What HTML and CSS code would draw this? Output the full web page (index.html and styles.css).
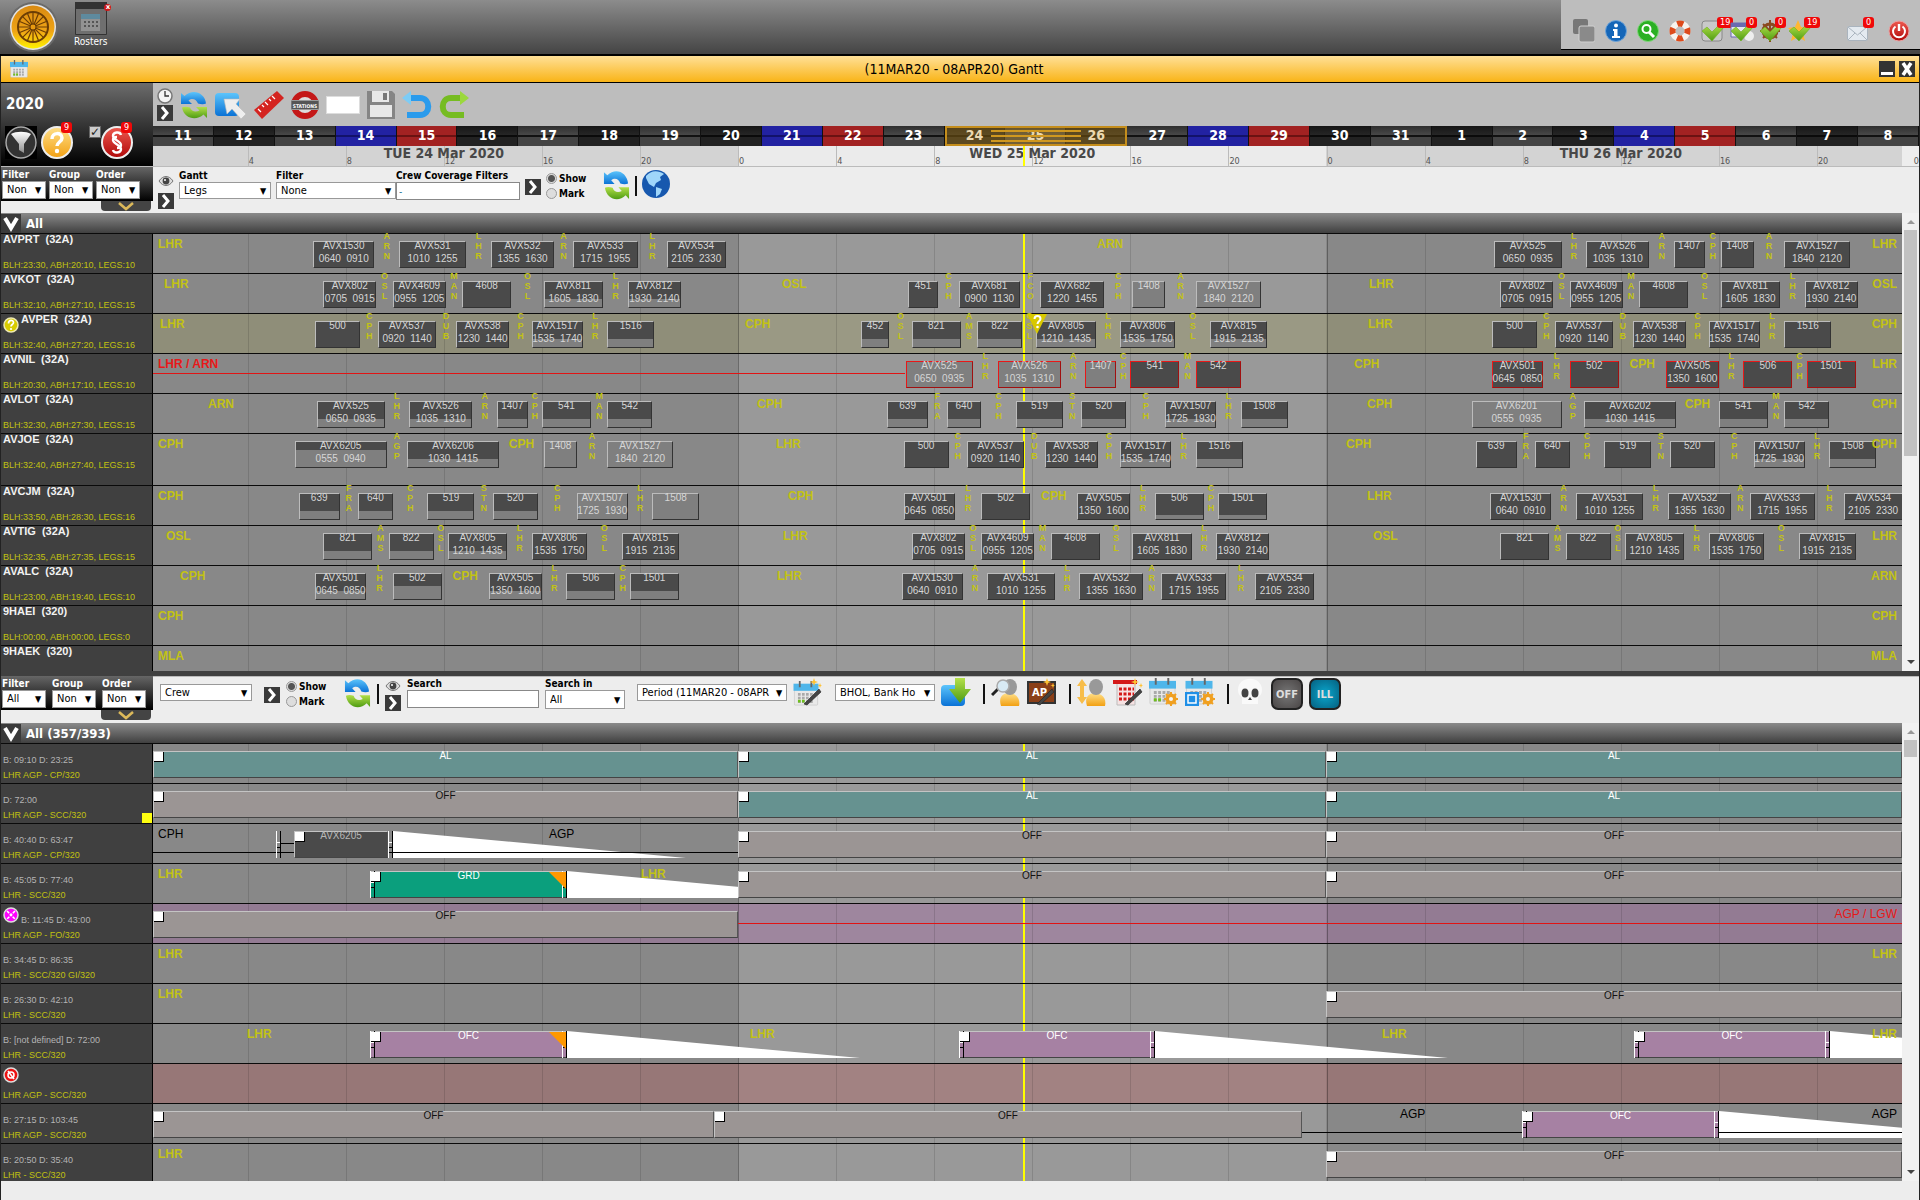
FILE: index.html
```html
<!DOCTYPE html>
<html lang="en">
<head>
<meta charset="utf-8">
<title>(11MAR20 - 08APR20) Gantt</title>
<link rel="stylesheet" href="styles.css">
</head>
<body>
<svg class="defs" width="0" height="0" aria-hidden="true">
  <defs>
    <linearGradient id="gBlue" x1="0" y1="0" x2="0" y2="1"><stop offset="0" stop-color="#5cc4fb"/><stop offset="1" stop-color="#0a72d6"/></linearGradient>
    <linearGradient id="gGreen" x1="0" y1="0" x2="0" y2="1"><stop offset="0" stop-color="#b4e04a"/><stop offset="1" stop-color="#4e9c12"/></linearGradient>
    <linearGradient id="gGold" x1="0" y1="0" x2="0" y2="1"><stop offset="0" stop-color="#ffe08a"/><stop offset="1" stop-color="#f2a012"/></linearGradient>
    <linearGradient id="gSilver" x1="0" y1="0" x2="0" y2="1"><stop offset="0" stop-color="#ffffff"/><stop offset="1" stop-color="#8c8c8c"/></linearGradient>
    <linearGradient id="gRed" x1="0" y1="0" x2="0" y2="1"><stop offset="0" stop-color="#ee5a50"/><stop offset="1" stop-color="#b00808"/></linearGradient>
    <linearGradient id="gLogo" x1="0" y1="0" x2="0" y2="1"><stop offset="0" stop-color="#d98a12"/><stop offset=".6" stop-color="#efa416"/><stop offset="1" stop-color="#fff200"/></linearGradient>
  </defs>
  <symbol id="refresh" viewBox="0 0 28 28" preserveAspectRatio="none">
    <path d="M1 2v11h11L8.500 9.500c4-3 8-1 9.500 3 3 1 6 1 8 0C25 2 13-3 4.500 5z" fill="url(#gBlue)"/>
    <path d="M27 16H16l3.500 3.500c-4 2-8 1-9.500-3-3-1-6-1-8 0 2 11 14 14 21.500 7L27 27z" fill="url(#gGreen)"/>
  </symbol>
  <symbol id="chev" viewBox="0 0 16 16"><path fill="#3a3a3a" d="M0 0h16v16H0z"/><path d="M5 2l5 6-5 6" fill="none" stroke="#fff" stroke-width="3"/></symbol>
  <symbol id="clock" viewBox="0 0 16 16"><circle cx="8" cy="8" r="7" fill="#f4f4f4" stroke="#777" stroke-width="1.5"/><path d="M8 3v5h4" fill="none" stroke="#333" stroke-width="1.3"/></symbol>
  <symbol id="eye" viewBox="0 0 16 12"><path d="M1 6c4-6 10-6 14 0-4 6-10 6-14 0z" fill="#ddd" stroke="#777"/><circle cx="8" cy="6" r="3.4" fill="#444"/><circle cx="7" cy="5" r="1" fill="#fff"/></symbol>
  <symbol id="cal" viewBox="0 0 28 28"><rect x="1" y="5" width="26" height="22" rx="1" fill="#e9e9e9" stroke="#bdbdbd" stroke-width=".6"/><path fill="#4fb6ea" d="M0 3h28v8H0z"/><path d="M7 0v7M20 0v7" stroke="#666" stroke-width="2"/>
    <path fill="none" stroke="#aaa" stroke-width="3" stroke-dasharray="3 1.5" d="M5 15h18M5 19h18M5 23h18"/><path fill="#6fbf1c" d="M5 21h3v3H5zM9.500 21h3v3H9.500z"/></symbol>
  <symbol id="wand" viewBox="0 0 28 28"><path d="M10 26L25 11l2 3-14 13z" fill="#444" stroke="#222" stroke-width=".6"/><path d="M20 0l1 3 3 1-3 1-1 3-1-3-3-1 3-1zM26 5l.7 2 1.300.5-1.300.5-.7 2-.7-2-2-.5 2-.5z" fill="#ffc233"/></symbol>
  <symbol id="gear" viewBox="0 0 14 14"><circle cx="7" cy="7" r="4" fill="none" stroke="#f0a020" stroke-width="3"/><path d="M7 0v14M0 7h14M2 2l10 10M12 2L2 12" stroke="#f0a020" stroke-width="2"/><circle cx="7" cy="7" r="2" fill="#f4f4f4"/></symbol>
  <symbol id="tick" viewBox="0 0 24 18"><path d="M1 7l5-4 5 5L19 0l4 3L11 17z" fill="url(#gGreen)" stroke="#6bb01c" stroke-width=".6"/></symbol>
  <symbol id="person" viewBox="0 0 28 28"><path d="M8 28c-3-9 2-13 8-13s12 5 10 13z" fill="url(#gGold)"/><ellipse cx="17" cy="9" rx="7" ry="8" fill="#999"/></symbol>
</svg>

<header class="desktop-bar">
  <button class="bare" aria-label="Home"><svg width="50" height="50" viewBox="0 0 50 50"><circle cx="25" cy="25" r="25" fill="#6a6a6a"/><circle cx="25" cy="25" r="23" fill="#e4e4e4"/><circle cx="25" cy="25" r="21.500" fill="url(#gLogo)"/><circle cx="25" cy="25" r="15" fill="none" stroke="#6b3d05" stroke-width="2"/><g stroke="#6b3d05" stroke-width="1.2"><path d="M25 10v30M10 25h30M14.400 14.400l21.200 21.200M35.600 14.400L14.400 35.600M11.100 19.300l27.800 11.400M38.900 19.300L11.100 30.700M19.300 11.100l11.400 27.800M30.700 11.100L19.300 38.900"/></g><circle cx="25" cy="25" r="3" fill="#e89a10" stroke="#6b3d05"/></svg></button>
  <button class="bare app"><svg width="32" height="33" viewBox="0 0 32 33"><path fill="#6f6f6f" stroke="#333" d="M.5.5h31v32H.5z"/><path fill="#333" d="M0 0h32v7H0z"/><path fill="#5e8a9e" d="M6 12h19v5H6z"/><path fill="#929292" d="M6 17h19v12H6z"/><path stroke="#555" stroke-width="2" stroke-dasharray="2 2" d="M9 20h14M9 24h14"/></svg><span>Rosters</span><i class="app-close">x</i></button>
  <div class="tray">
    <div class="tray-group wide">
      <button class="bare" aria-label="Windows"><svg width="22" height="24" viewBox="0 0 22 24"><rect x="0" y="0" width="15" height="15" rx="2" fill="#777"/><rect x="6" y="7" width="16" height="16" rx="2" fill="#8a8a8a" stroke="#d0d0d0"/></svg></button>
      <button class="bare" aria-label="Information"><svg width="22" height="22" viewBox="0 0 22 22"><circle cx="11" cy="11" r="10.500" fill="#1566b8" stroke="#6da3d8"/><circle cx="11" cy="5.500" r="2" fill="#fff"/><path d="M8 9h4.500v7H15v2H7v-2h2v-5H8z" fill="#fff"/></svg></button>
      <button class="bare" aria-label="Search"><svg width="22" height="22" viewBox="0 0 22 22"><circle cx="11" cy="11" r="10.500" fill="#2bb024" stroke="#7fd67a"/><circle cx="9.500" cy="9" r="4" fill="none" stroke="#fff" stroke-width="2"/><path d="M12 12l5 5" stroke="#fff" stroke-width="3"/></svg></button>
      <button class="bare" aria-label="Help"><svg width="22" height="22" viewBox="0 0 22 22"><circle cx="11" cy="11" r="7.500" fill="none" stroke="#f7f3ee" stroke-width="6"/><circle cx="11" cy="11" r="7.500" fill="none" stroke="#dd4b1c" stroke-width="6" stroke-dasharray="6 5.780" stroke-dashoffset="3"/></svg></button>
    </div>
    <div class="tray-group">
      <button class="bare" aria-label="Requests"><svg width="24" height="22" viewBox="0 0 24 22"><rect x="1" y="1" width="20" height="20" rx="3" fill="#c9c9c9" stroke="#888"/><use href="#tick" y="4" width="24" height="18"/></svg><b class="badge">19</b></button>
      <button class="bare" aria-label="Schedules"><svg width="24" height="22" viewBox="0 0 24 22"><path fill="#e4e4ee" stroke="#6a6ab0" d="M1 3h18v14H1z"/><path fill="#6a6ab0" d="M1 3h18v4H1z"/><circle cx="19" cy="16" r="5" fill="#eee"/><use href="#tick" y="4" width="24" height="18"/></svg><b class="badge">0</b></button>
      <button class="bare" aria-label="Duties"><svg width="24" height="22" viewBox="0 0 24 22"><circle cx="11" cy="11" r="7" fill="none" stroke="#8b4a20" stroke-width="3"/><path d="M11 0v22M1 11h20M4 4l14 14M18 4L4 18" stroke="#8b4a20" stroke-width="2"/><use href="#tick" y="4" width="24" height="18"/></svg><b class="badge">0</b></button>
      <button class="bare" aria-label="Alerts"><svg width="24" height="22" viewBox="0 0 24 22"><path d="M10 0l3 7 7 1-5 5 2 8-7-4-7 4 2-8-5-5 7-1z" fill="#ffb733"/><use href="#tick" y="4" width="24" height="18"/></svg><b class="badge">19</b></button>
    </div>
    <button class="bare mail" aria-label="Mail"><svg width="22" height="22" viewBox="0 0 22 22"><rect x=".5" y="6.500" width="20" height="14" rx="1" fill="#e4eaf0" stroke="#aab4be"/><path d="M1 7l9.500 8L20 7M1 20l7-7M20 20l-7-7" fill="none" stroke="#aab4be"/></svg><b class="badge">0</b></button>
    <button class="bare" aria-label="Log out"><svg width="22" height="22" viewBox="0 0 22 22"><circle cx="11" cy="11" r="10" fill="url(#gRed)" stroke="#e9a0a0"/><path d="M7.500 6.500a6 6 0 1 0 7 0" fill="none" stroke="#fff" stroke-width="2"/><path d="M11 4v7" stroke="#fff" stroke-width="2.400"/></svg></button>
  </div>
</header>

<main class="window">
  <div class="titlebar">
    <svg width="20" height="18"><use href="#cal"/></svg>
    <h1>(11MAR20 - 08APR20) Gantt</h1>
    <div class="win-buttons">
      <button aria-label="Minimise"><svg width="16" height="16"><path fill="#fff" d="M2 11h12v3H2z"/></svg></button>
      <button aria-label="Close"><svg width="16" height="16"><path d="M4 2l8 12M12 2L4 14" stroke="#fff" stroke-width="3.500"/></svg></button>
    </div>
  </div>

  <section class="head">
    <aside class="head-side">
      <strong>2020</strong>
      <div class="side-icons">
        <button class="bare" aria-label="Filter"><svg width="32" height="33" viewBox="0 0 32 33"><path d="M0 0h32v33H0z"/><ellipse cx="16" cy="16.500" rx="15" ry="15.500" fill="#333" stroke="#aaa" stroke-width="1.500"/><path d="M6 8c5-3 15-3 20 0l-7 10v9l-5-3v-6z" fill="url(#gSilver)"/></svg></button>
        <button class="bare" aria-label="Questions"><svg width="32" height="33" viewBox="0 0 32 33"><ellipse cx="16" cy="16.500" rx="15" ry="15.500" fill="url(#gGold)" stroke="#eee" stroke-width="2"/><path d="M11 13c0-7 10-7 10-1 0 4-5 4-5 8" fill="none" stroke="#fff" stroke-width="3.500"/><circle cx="16" cy="25" r="2.200" fill="#fff"/></svg><b class="badge">9</b></button>
        <input type="checkbox" checked aria-label="Show violations">
        <button class="bare" aria-label="Violations"><svg width="32" height="33" viewBox="0 0 32 33"><ellipse cx="16" cy="16.500" rx="15" ry="15.500" fill="url(#gRed)" stroke="#eee" stroke-width="2"/><path d="M20 9c-1-4-8-3-8 1 0 4 8 5 8 9 0 2-2 3-4 3M12 24c1 4 8 3 8-1 0-4-8-5-8-9 0-2 2-3 4-3" fill="none" stroke="#fff" stroke-width="2.400"/></svg><b class="badge">9</b></button>
      </div>
    </aside>
    <div class="head-main">
      <div class="tools">
        <div class="stack"><svg width="16" height="16"><use href="#clock"/></svg><button class="bare" aria-label="Expand"><svg width="16" height="16"><use href="#chev"/></svg></button></div>
        <button class="bare" aria-label="Refresh"><svg width="28" height="28"><use href="#refresh"/></svg></button>
        <button class="bare" aria-label="Select"><svg width="32" height="28" viewBox="0 0 32 28"><rect x="0" y="2" width="24" height="23" rx="4" fill="url(#gBlue)"/><path d="M9 8h16l-4 5 10 10-5 5-9-10-5 5z" fill="#eee" stroke="#bbb" stroke-width=".6"/></svg></button>
        <button class="bare" aria-label="Measure"><svg width="30" height="28" viewBox="0 0 30 28"><path d="M23 0l7 7L8 28 0 19z" fill="#d42420"/><path d="M4 18l3 3M8 14l2 2M11 11l3 3M15 8l2 2M18 5l3 3" stroke="#fff" stroke-width="1.200"/></svg></button>
        <button class="bare" aria-label="Stations"><svg width="28" height="28" viewBox="0 0 28 28"><circle cx="14" cy="14" r="11" fill="#ddd" stroke="#c41818" stroke-width="6"/><path fill="#555" stroke="#999" d="M0 9.500h28v9H0z"/><text x="14" y="16.500" text-anchor="middle" class="stations">STATIONS</text></svg></button>
        <input class="code" type="text" aria-label="Station code">
        <button class="bare" aria-label="Save"><svg width="28" height="28" viewBox="0 0 28 28"><path d="M0 0h25l3 3v25H0z" fill="#858585"/><path fill="#e8e8e8" d="M5 0h17v11H5zM3 14h22v12H3z"/><path fill="#777" d="M16 2h4v7h-4z"/></svg></button>
        <button class="bare" aria-label="Undo"><svg width="30" height="28" viewBox="0 0 30 28"><path d="M8 7h10c11 0 11 17 0 17H5" fill="none" stroke="#2a9bec" stroke-width="6"/><path d="M0 7l9-7v14z" fill="#7dccf5"/></svg></button>
        <button class="bare" aria-label="Redo"><svg width="30" height="28" viewBox="0 0 30 28"><path d="M22 7H12c-11 0-11 17 0 17h13" fill="none" stroke="#76bc22" stroke-width="6"/><path d="M30 7l-9-7v14z" fill="#9bd83c"/></svg></button>
      </div>
      <div class="days" id="days"></div>
      <div class="hours"><div class="hours-scale" id="hours"></div><span class="hours-end">0</span></div>
    </div>
  </section>

  <section class="filters">
    <div class="filter-side">
      <div class="filter-set">
        <label>Filter<span class="pick"><select><option>Non</option></select></span></label>
        <label>Group<span class="pick"><select><option>Non</option></select></span></label>
        <label>Order<span class="pick"><select><option>Non</option></select></span></label>
      </div>
      <button class="tab" aria-label="More"><svg width="50" height="9"><path d="M18 1l7 6 7-6" fill="none" stroke="#dcb95a" stroke-width="2.500"/></svg></button>
    </div>
    <div class="filter-main">
      <div class="stack spaced"><svg width="16" height="12"><use href="#eye"/></svg><button class="bare" aria-label="Expand"><svg width="16" height="16"><use href="#chev"/></svg></button></div>
      <label class="w-91">Gantt<span class="pick"><select><option>Legs</option></select></span></label>
      <div class="joined">
        <label class="w-120">Filter<span class="pick"><select><option>None</option></select></span></label>
        <label class="w-124">Crew Coverage Filters<input type="text" value="-"></label>
      </div>
      <button class="bare" aria-label="Apply"><svg width="16" height="16"><use href="#chev"/></svg></button>
      <div class="radios"><label><input type="radio" name="legmode" checked>Show</label><label><input type="radio" name="legmode">Mark</label></div>
      <button class="bare" aria-label="Refresh"><svg width="27" height="30"><use href="#refresh"/></svg></button>
      <i class="sep"></i>
      <button class="bare" aria-label="World"><svg width="28" height="28" viewBox="0 0 28 28"><circle cx="14" cy="14" r="14" fill="#1758ae"/><path d="M4 6c5-6 12-6 18-2l-4 3 1 3-5 3-2 4-5-3-3-6zM14 17l6 2-2 5-4 3z" fill="#9fd6fa"/></svg></button>
    </div>
  </section>

  <section class="pane">
    <div class="scrolled">
      <div class="group-head"><button aria-label="Collapse"><svg width="20" height="19"><path d="M4 4l6 10 6-10" fill="none" stroke="#fff" stroke-width="4"/></svg></button>All</div>
      <div class="chart" id="aircraft"></div>
    </div>
    <div class="scrollbar long"><span class="up"></span><i></i><span class="down"></span></div>
  </section>

  <section class="filters second">
    <div class="filter-side">
      <div class="filter-set roomy">
        <label>Filter<span class="pick"><select><option>All</option></select></span></label>
        <label>Group<span class="pick"><select><option>Non</option></select></span></label>
        <label>Order<span class="pick"><select><option>Non</option></select></span></label>
      </div>
      <button class="tab" aria-label="More"><svg width="50" height="9"><path d="M18 1l7 6 7-6" fill="none" stroke="#dcb95a" stroke-width="2.500"/></svg></button>
    </div>
    <div class="filter-main">
      <span class="pick w-91"><select aria-label="Resource"><option>Crew</option></select></span>
      <button class="bare near" aria-label="Apply"><svg width="16" height="16"><use href="#chev"/></svg></button>
      <div class="radios"><label><input type="radio" name="crewmode" checked>Show</label><label><input type="radio" name="crewmode">Mark</label></div>
      <button class="bare" aria-label="Refresh"><svg width="27" height="30"><use href="#refresh"/></svg></button>
      <i class="sep"></i>
      <div class="stack"><svg width="16" height="16"><use href="#eye"/></svg><button class="bare" aria-label="Expand"><svg width="16" height="16"><use href="#chev"/></svg></button></div>
      <label class="w-132">Search<input type="text"></label>
      <label class="w-80">Search in<span class="pick tall"><select><option>All</option></select></span></label>
      <span class="pick w-150 near"><select aria-label="Period"><option>Period (11MAR20 - 08APR</option></select></span>
      <button class="bare" aria-label="Generate"><svg width="30" height="28"><use href="#cal" y="3" width="26" height="25"/><use href="#wand"/></svg></button>
      <span class="pick w-100 near"><select aria-label="Activities"><option>BHOL, Bank Ho</option></select></span>
      <button class="bare" aria-label="Download"><svg width="30" height="28" viewBox="0 0 30 28"><rect x="0" y="7" width="24" height="21" rx="4" fill="url(#gBlue)"/><path d="M14 0h10v11h6L19 25 8 11h6z" fill="url(#gGreen)"/></svg></button>
      <i class="sep"></i>
      <button class="bare" aria-label="Find crew"><svg width="30" height="28" viewBox="0 0 30 28"><use href="#person" x="2" width="28" height="28"/><path d="M8 10l-7 7" stroke="#222" stroke-width="3"/><circle cx="12" cy="8" r="6" fill="#d8eaf4" stroke="#aaa" stroke-width="1.500"/></svg></button>
      <button class="bare" aria-label="Auto plan"><svg width="30" height="28" viewBox="0 0 30 28"><rect x="1" y="4" width="27" height="21" fill="#8a3f18" stroke="#333" stroke-width="2"/><text x="5" y="18" class="ap">AP</text><use href="#wand" width="28" height="28"/></svg></button>
      <i class="sep"></i>
      <button class="bare" aria-label="Move crew"><svg width="30" height="28" viewBox="0 0 30 28"><use href="#person" x="2" width="28" height="28"/><path d="M5 1l5 7H7v11h3l-5 7-5-7h3V8H0z" fill="#f7bd4a"/></svg></button>
      <button class="bare" aria-label="Remove days"><svg width="30" height="28" viewBox="0 0 30 28"><path fill="#f6e2e2" stroke="#bbb" d="M4 4h18v23H4z"/><path fill="#d41818" d="M0 2h24v4H0z"/><path d="M6 11h15M6 16h15M6 21h15" stroke="#d41818" stroke-width="3" stroke-dasharray="3 1.500"/><use href="#wand" x="2" width="28" height="28"/></svg></button>
      <button class="bare" aria-label="Day settings"><svg width="30" height="28"><use href="#cal" width="27" height="27"/><use href="#gear" x="15" y="14" width="14" height="14"/></svg></button>
      <button class="bare" aria-label="Range settings"><svg width="30" height="28"><use href="#cal" width="28" height="27"/><path fill="#1f8fe6" d="M0 14h14v14H0z"/><path d="M3 17h8v8H3z" fill="none" stroke="#fff" stroke-width="1.500"/><use href="#gear" x="16" y="14" width="14" height="14"/></svg></button>
      <i class="sep"></i>
      <button class="bare" aria-label="Skull"><svg width="30" height="28" viewBox="0 0 30 28"><path d="M3 12C3-3 27-3 27 12c0 4-2 6-4 7v7H7v-7c-2-1-4-3-4-7z" fill="#f9f9f9"/><ellipse cx="10" cy="15" rx="3.500" ry="4.500" fill="#444"/><ellipse cx="20" cy="15" rx="3.500" ry="4.500" fill="#444"/><path d="M15 19l-2 3h4z" fill="#444"/></svg></button>
      <button class="duty">OFF</button>
      <button class="duty ill">ILL</button>
    </div>
  </section>

  <section class="pane">
    <div class="scrolled">
      <div class="group-head"><button aria-label="Collapse"><svg width="20" height="19"><path d="M4 4l6 10 6-10" fill="none" stroke="#fff" stroke-width="4"/></svg></button>All (357/393)</div>
      <div class="chart" id="crew"></div>
    </div>
    <div class="scrollbar"><span class="up"></span><i></i><span class="down"></span></div>
  </section>
</main>
<script src="gantt.js"></script>
</body>
</html>
```
FILE: styles.css
```css
* { box-sizing: border-box; }

body {
  margin: 0;
  height: 100vh;
  display: flex;
  flex-direction: column;
  overflow: hidden;
  background: #ededed;
  color: #000;
  font: 11px/13px "DejaVu Sans Condensed", "DejaVu Sans", sans-serif;
}

svg { display: block; }
.defs { position: absolute; }

button, input, select { font: inherit; color: inherit; margin: 0; }

.bare {
  position: relative;
  border: 0;
  padding: 0;
  background: none;
  flex: none;
}

/* desktop bar */
.desktop-bar {
  flex: none;
  height: 56px;
  display: flex;
  align-items: flex-start;
  gap: 16px;
  padding-left: 8px;
  background: linear-gradient(#8c8c8c, #444);
  border-bottom: 2px solid #000;
}
.desktop-bar > .bare { margin-top: 2px; }
.app {
  display: flex;
  flex-direction: column;
  align-items: center;
  color: #fff;
  font-size: 10px;
}
.app-close {
  position: absolute;
  right: -4px;
  top: 2px;
  width: 7px;
  height: 7px;
  border-radius: 50%;
  background: #d01818;
  color: #fff;
  font: bold 7px/6px "DejaVu Sans", sans-serif;
}
.tray {
  margin-left: auto;
  width: 359px;
  height: 50px;
  display: flex;
  align-items: center;
  gap: 19px;
  padding: 12px 10px 0 12px;
  background: #bdbdbd;
  border-bottom: 1px solid #000;
}
.tray-group { display: flex; gap: 5px; }
.tray-group.wide { gap: 10px; margin-right: -9px; }
.tray .mail { margin-left: auto; }
.badge {
  position: absolute;
  left: 16px;
  top: -3px;
  min-width: 11px;
  padding: 0 3px;
  border-radius: 3px;
  background: #f00808;
  color: #fff;
  font: 9px/11px "DejaVu Sans Condensed", sans-serif;
}

/* window */
.window {
  flex: 1;
  min-height: 0;
  display: flex;
  flex-direction: column;
  padding-bottom: 19px;
  border: solid #222;
  border-width: 0 1px;
}
.titlebar {
  flex: none;
  height: 27px;
  display: flex;
  align-items: center;
  padding: 0 4px 0 8px;
  background: linear-gradient(#ffe097, #f9b417);
  border-bottom: 1px solid #000;
}
.titlebar h1 {
  flex: 1;
  margin: 0;
  text-align: center;
  font-size: 14px;
  line-height: 16px;
  font-weight: normal;
}
.win-buttons { display: flex; gap: 4px; }
.win-buttons button { width: 16px; height: 16px; padding: 0; border: 0; background: #333; }

.head, .filters { flex: none; display: grid; grid-template-columns: 152px 1fr; }
.head { height: 84px; border-bottom: 1px solid #bbb; }
.head-side {
  display: flex;
  flex-direction: column;
  justify-content: space-between;
  padding: 12px 4px 7px;
  color: #fff;
  background: linear-gradient(#6c6c6c, #000);
}
.head-side strong { font-size: 15px; line-height: 18px; padding-left: 1px; }
.side-icons { display: flex; gap: 4px; align-items: flex-start; }
.side-icons .badge { left: 20px; top: -4px; }
.side-icons input {
  appearance: none;
  width: 12px;
  height: 12px;
  margin: 0 -4px 0 12px;
  background: #ccc;
  border: 1px solid #666;
}
.side-icons input:checked::before { content: "✓"; display: block; color: #222; font: bold 12px/10px "DejaVu Sans", sans-serif; }
.head-main { min-width: 0; display: grid; grid-template-rows: 1fr 20px 20px; }
.tools {
  display: flex;
  align-items: center;
  gap: 7px;
  padding-left: 4px;
  background: #bdbdbd;
}
.stack { display: flex; flex-direction: column; gap: 1px; flex: none; }
.stack.spaced { gap: 6px; }
.code { width: 34px; height: 18px; border: 1px solid #ddd; background: #fff; }
.stations { font: bold 5px "DejaVu Sans Condensed", sans-serif; fill: #fff; }
.ap { font: bold 10px "DejaVu Sans", sans-serif; fill: #fff; }

.days { position: relative; display: flex; }
.day {
  flex: 1;
  text-align: center;
  color: #fff;
  font-size: 14px;
  font-weight: bold;
  line-height: 18px;
  border-right: 1px solid #111;
  background: linear-gradient(#2f2f2f, #484848 9px, #111 9px, #111 11px, #444 11px);
}
.day.even { background: linear-gradient(#161616, #262626 9px, #0a0a0a 9px, #0a0a0a 11px, #222 11px); }
.day.sat { background: linear-gradient(#2222a2 9px, #12126a 9px, #12126a 11px, #2222a2 11px); }
.day.sun { background: linear-gradient(#a22222 9px, #6a1212 9px, #6a1212 11px, #a22222 11px); }
.range {
  position: absolute;
  top: 0;
  bottom: 0;
  border: 2px solid #c58e1c;
  background: rgba(200, 145, 30, .35);
  display: flex;
  flex-direction: column;
  align-items: center;
  justify-content: center;
  gap: 3px;
}
.range i { width: 50%; height: 2px; background: #d0981f; }

.hours { display: grid; grid-template-columns: 1fr 17px; background: #ededed; min-width: 0; }
.hours-scale { position: relative; overflow: hidden; background: #d3d3d3; }
.hours-end { align-self: end; text-align: right; font-size: 9px; line-height: 10px; color: #555; }
.mid-day { position: absolute; top: 0; bottom: 0; background: #ebebeb; }
.hours-scale span {
  position: absolute;
  top: 0;
  bottom: 0;
  padding-top: 10px;
  border-left: 1px solid #bbb;
  font-size: 9px;
  line-height: 10px;
  color: #555;
}
.hours-scale b {
  position: absolute;
  top: 0;
  transform: translateX(-50%);
  font-size: 14px;
  line-height: 15px;
  color: #484848;
  white-space: nowrap;
}
.now { position: absolute; top: 0; bottom: 0; width: 2px; background: #ff0; }

/* filters */
.filters { height: 46px; background: #ededed; }
.filters.second { height: 52px; border-top: 5px solid #404040; box-shadow: inset 0 1px #bbb; }
.filter-side { font-size: 10px; font-weight: bold; color: #fff; }
.filter-set {
  height: 34px;
  display: flex;
  gap: 3px;
  padding: 2px 1px;
  background: linear-gradient(#666, #000);
}
.filter-set.roomy { gap: 6px; }
.filter-set label { width: 44px; line-height: 12px; }
.filter-set .pick { height: 18px; color: #000; font-weight: normal; }
.tab { display: block; margin-left: 100px; width: 50px; height: 10px; padding: 0; border: 0; border-radius: 0 0 4px 4px; background: #444; }

.pick {
  display: grid;
  grid-template-columns: 1fr 14px;
  align-items: center;
  height: 17px;
  background: #fff;
  border: 1px solid #999;
  font-size: 11px;
  font-weight: normal;
}
.pick.tall { height: 19px; }
.pick select {
  grid-area: 1 / 1;
  width: 100%;
  min-width: 0;
  appearance: none;
  border: 0;
  padding: 0 0 0 4px;
  background: none;
}
.pick::after { content: "▼"; grid-area: 1 / 2; font-size: 9px; line-height: 12px; text-align: center; }

.filter-main {
  display: flex;
  align-items: flex-start;
  gap: 5px;
  padding: 3px 0 0 5px;
}
.filter-main label { font-size: 10px; font-weight: bold; line-height: 12px; flex: none; }
.filter-main .pick { flex: none; }
.filter-main label > input[type="text"] {
  display: block;
  width: 100%;
  height: 18px;
  padding: 0 2px;
  border: 1px solid #888;
  background: #fff;
  color: #2b7a9a;
  font-weight: normal;
}
.filter-main > .stack { padding-top: 5px; }
.joined { display: flex; }
.filters > .filter-main > .bare:has(svg[height="16"]) { margin-top: 9px; }
.filters > .filter-main > .pick { margin-top: 6px; }
.near { margin-left: 6px; }
.second .filter-main { gap: 6px; padding: 2px 0 0 7px; }
.second .stack { padding-top: 0; }
.w-80 { width: 80px; }
.w-91 { width: 92px; }
.w-100 { width: 100px; }
.w-120 { width: 120px; }
.w-124 { width: 124px; }
.w-132 { width: 132px; }
.w-150 { width: 150px; }
.sep { width: 2px; height: 20px; margin-top: 6px; background: #111; }
.sep ~ .sep { margin-left: 6px; }
.radios { width: 52px; display: flex; flex-direction: column; gap: 2px; padding-top: 2px; }
.radios label { display: flex; align-items: center; gap: 2px; line-height: 13px; }
.radios input {
  appearance: none;
  width: 11px;
  height: 11px;
  border: 1px solid #999;
  border-radius: 50%;
  background: #ddd;
}
.radios input:checked { background: radial-gradient(#555 3px, #ddd 4px); }
.duty {
  width: 32px;
  height: 32px;
  padding: 0;
  border: 2px solid #222;
  border-radius: 7px;
  background: radial-gradient(#777, #4a4646);
  color: #ddd;
  font-size: 11px;
  font-weight: bold;
}
.duty.ill { background: radial-gradient(#0aa6cc, #056080); }

/* panes */
.pane { flex: 1 1 0; min-height: 0; display: grid; grid-template-columns: 1fr 17px; }
.scrolled { min-width: 0; min-height: 0; display: flex; flex-direction: column; overflow: hidden; }
.group-head {
  flex: none;
  height: 20px;
  display: flex;
  align-items: center;
  gap: 5px;
  color: #fff;
  font-size: 13px;
  font-weight: bold;
  background: linear-gradient(#8a8a8a, #404040);
}
.group-head button { padding: 0; border: 0; background: #3a3a3a; }
.chart { flex: 1; min-height: 0; overflow: hidden; }
.row { display: grid; grid-template-columns: 152px 1fr; height: 40px; border-top: 1px solid #0a0a0a; }
.row.high { height: 52px; }
.who {
  position: relative;
  display: flex;
  flex-wrap: wrap;
  align-content: flex-start;
  padding-left: 2px;
  border-right: 1px solid #000;
  background: #404040;
  font-family: "Liberation Sans", Arial, sans-serif;
  font-size: 9px;
  color: #b4b4b4;
  white-space: pre;
}
.who > span { flex: 1; }
.who em { flex: 0 0 100%; font-style: normal; color: #c0c010; }
.who strong { flex: 1; font-size: 11px; line-height: 11px; color: #f2f2f2; }
.aircraft .who em { line-height: 12px; padding-top: 14px; }
.crew .who > span { padding-top: 9px; line-height: 15px; }
.crew .who em { line-height: 15px; }
.mark { width: 16px; height: 16px; margin: 3px 2px 0 0; }
.aircraft .mark { margin-bottom: -8px; }
.crew .mark { margin-bottom: 5px; }
.flag { position: absolute; right: 0; bottom: 0; width: 10px; height: 10px; background: #ff1; }

.track {
  position: relative;
  overflow: hidden;
  background: linear-gradient(90deg, #888 33.47%, #999 33.47%, #999 67.08%, #888 67.08%);
  font-family: "Liberation Sans", Arial, sans-serif;
}
.aircraft .track { overflow: visible; }
.tint { position: absolute; inset: 0; }
.tint.yellow { background: rgba(160, 155, 85, .3); }
.tint.purple { background: rgba(165, 105, 165, .4); }
.tint.red { background: rgba(175, 95, 95, .4); }
.line { position: absolute; top: 0; bottom: 0; width: 1px; background: rgba(0, 0, 0, .12); }
.line.midnight { background: rgba(0, 0, 0, .3); }
.rule { position: absolute; top: 19px; height: 1px; background: #000; }
.rule.alarm { background: #e01414; }
.rule.low { top: 28px; }

.leg {
  position: absolute;
  top: 7px;
  height: 27px;
  display: flex;
  flex-direction: column;
  align-items: center;
  border: 1px solid;
  border-color: #bcbcbc #333 #333 #bcbcbc;
  color: #d6d6d6;
  font-size: 10px;
  white-space: pre;
  background: linear-gradient(0deg, #7f7f7f var(--open), #4a4a4a var(--open));
}
.leg b { font-weight: normal; line-height: 8px; }
.leg span { line-height: 17px; }
.leg.alarm { border-color: #e81818 #a01010 #a01010 #e81818; }

.place {
  position: absolute;
  top: 3px;
  font-size: 12px;
  line-height: 14px;
  font-weight: bold;
  color: #c2c214;
  white-space: nowrap;
}
.place.centred, .via { transform: translateX(-50%); }
.place.left { left: 5px; }
.place.right { right: 5px; }
.place.black { color: #000; font-weight: normal; }
.place.alarm { color: #e81818; }
.via {
  position: absolute;
  top: -3px;
  width: 8px;
  text-align: center;
  font-size: 9px;
  line-height: 10px;
  font-weight: bold;
  color: #c2c214;
  word-break: break-all;
}
.warn { position: absolute; top: 0; }

.bar {
  position: absolute;
  top: 7px;
  height: 27px;
  border: 1px solid;
  border-color: #c4c4c4 #555 #444 #c4c4c4;
  text-align: center;
  font-size: 10px;
  line-height: 8px;
  color: #fff;
}
.bar.AL { background: #669290; }
.bar.OFF { background: #9b9594; color: #111; }
.bar.GRD { background: #0b9f7d; }
.bar.OFC { background: #a681a3; }
.bar.FLT { background: #4a4a4a; color: #b8b8b8; }
.chip {
  position: absolute;
  z-index: 1;
  left: 0;
  top: 0;
  width: 10px;
  height: 10px;
  background: #fff;
  border: solid #000;
  border-width: 0 1px 1px 0;
}
.corner { position: absolute; z-index: 1; right: 0; top: 0; width: 17px; height: 17px; background: #ff9800; clip-path: polygon(0 0, 100% 0, 100% 100%); }
.grip { position: absolute; top: 7px; width: 5px; height: 27px; border: solid; border-width: 0 1px; border-color: #fff #000 #000 #fff; }
.grip::before { content: ""; display: block; height: 4px; margin-top: 11px; border: solid; border-width: 1px 0; border-color: #fff #000 #000; }
.wedge { position: absolute; top: 7px; height: 27px; background: #fff; clip-path: polygon(0 0, 100% 100%, 0 100%); }

/* scrollbars */
.scrollbar { display: flex; flex-direction: column; align-items: center; background: #f1f1f1; padding: 7px 0; }
.scrollbar i { width: 13px; height: 17px; margin-top: 6px; background: #c1c1c1; }
.scrollbar.long i { flex: 0 0 51%; }
.up, .down { border: 4px solid transparent; }
.up { border-top: 0; border-bottom-color: #999; }
.down { border-bottom: 0; border-top-color: #444; margin-top: auto; }
```
FILE: gantt.js
```js
// Time axis: the chart starts just after TUE 00:00 and ends at THU 23:30.
// Positions are on a 1749-unit wide axis whose left edge is at 153.
const LEFT = 153, WIDTH = 1749, MIDNIGHT = 149.6, HOUR = 24.52, NOW = 1023;
const pos = x => ((x - LEFT) / WIDTH * 100) + '%';
const len = w => (w / WIDTH * 100) + '%';
const time = (day, hhmm) => MIDNIGHT + (day * 24 + Math.floor(hhmm / 100) + (hhmm % 100) / 60) * HOUR;

// number: [departure, arrival, destination, times shown]
const FLIGHTS = {
  1530: [640, 910, 'ARN', 1], 531: [1010, 1255, 'LHR', 1], 532: [1355, 1630, 'ARN', 1], 533: [1715, 1955, 'LHR', 1], 534: [2105, 2330, 'ARN', 1],
  525: [650, 935, 'LHR', 1], 526: [1035, 1310, 'ARN', 1], 1407: [1410, 1525, 'CPH'], 1408: [1605, 1725, 'ARN'], 1527: [1840, 2120, 'LHR', 1],
  802: [705, 915, 'OSL', 1], 4609: [955, 1205, 'MAN', 1], 4608: [1245, 1445, 'OSL'], 811: [1605, 1830, 'LHR', 1], 812: [1930, 2140, 'OSL', 1],
  451: [655, 810, 'CPH'], 681: [900, 1130, 'FCO', 1], 682: [1220, 1455, 'CPH', 1],
  500: [645, 835, 'CPH'], 537: [920, 1140, 'DUB', 1], 538: [1230, 1440, 'CPH', 1], 1517: [1535, 1740, 'LHR', 1], 1516: [1840, 2035, 'CPH'],
  452: [500, 610, 'OSL'], 821: [705, 905, 'AMS'], 822: [945, 1135, 'OSL'], 805: [1210, 1435, 'LHR', 1], 806: [1535, 1750, 'OSL', 1], 815: [1915, 2135, 'LHR', 1],
  541: [1600, 1800, 'MAN'], 542: [1840, 2030, 'CPH'],
  501: [645, 850, 'LHR', 1], 502: [955, 1155, 'CPH'], 505: [1350, 1600, 'LHR', 1], 506: [1700, 1900, 'CPH'], 1501: [1935, 2135, 'LHR'],
  639: [605, 745, 'FRA'], 640: [830, 955, 'CPH'], 519: [1120, 1315, 'STN'], 520: [1400, 1550, 'CPH'], 1507: [1725, 1930, 'LHR', 1], 1508: [2030, 2225, 'CPH'],
  6205: [555, 940, 'AGP', 1], 6206: [1030, 1415, 'CPH', 1], 6201: [555, 935, 'AGP', 1], 6202: [1030, 1415, 'CPH', 1]
};

// legs: one string per day, "number" or "number/open percentage"
const AIRCRAFT = [
  { name: 'AVPRT  (32A)', info: 'BLH:23:30, ABH:20:10, LEGS:10', left: 'LHR', right: 'LHR', places: [[1097, 'ARN']],
    legs: ['1530 531 532 533 534', '', '525 526 1407 1408 1527'] },
  { name: 'AVKOT  (32A)', info: 'BLH:32:10, ABH:27:10, LEGS:15', right: 'OSL', places: [[164, 'LHR'], [782, 'OSL'], [1369, 'LHR']],
    legs: ['802 4609 4608 811/33 812/33', '451 681 682 1408/100 1527/100', '802 4609 4608 811 812'] },
  { name: 'AVPER  (32A)', info: 'BLH:32:40, ABH:27:20, LEGS:16', tint: 'yellow', mark: 'ask', warn: 1027, right: 'CPH', places: [[160, 'LHR'], [745, 'CPH'], [1368, 'LHR']],
    legs: ['500 537 538 1517/33 1516/33', '452/33 821/33 822/33 805/33 806/33 815/33', '500 537 538 1517 1516'] },
  { name: 'AVNIL  (32A)', info: 'BLH:20:30, ABH:17:10, LEGS:10', alarm: true, right: 'LHR', places: [[158, 'LHR / ARN', 'alarm'], [1354, 'CPH']], rule: [153, 905, 'alarm'],
    legs: ['', '525/100 526/100 1407/100 541 542', '501 502 505 506 1501'] },
  { name: 'AVLOT  (32A)', info: 'BLH:32:30, ABH:27:30, LEGS:15', right: 'CPH', places: [[208, 'ARN'], [757, 'CPH'], [1367, 'CPH']],
    legs: ['525/33 526/33 1407/33 541/33 542/33', '639/33 640/33 519/33 520/33 1507/33 1508/33', '6201/100 6202/33 541/33 542/33'] },
  { name: 'AVJOE  (32A)', info: 'BLH:32:40, ABH:27:40, LEGS:15', high: true, left: 'CPH', right: 'CPH', places: [[776, 'LHR'], [1346, 'CPH']],
    legs: ['6205/67 6206/33 1408/100 1527/100', '500 537 538 1517/33 1516/33', '639 640 519 520 1507/33 1508/33'] },
  { name: 'AVCJM  (32A)', info: 'BLH:33:50, ABH:28:30, LEGS:16', left: 'CPH', places: [[788, 'CPH'], [1367, 'LHR']],
    legs: ['639/33 640/33 519/33 520/33 1507/100 1508/100', '501 502 505 506/15 1501/15', '1530 531 532 533 534'] },
  { name: 'AVTIG  (32A)', info: 'BLH:32:35, ABH:27:35, LEGS:15', right: 'LHR', places: [[166, 'OSL'], [783, 'LHR'], [1373, 'OSL']],
    legs: ['821/33 822/33 805/33 806 815', '802 4609 4608 811 812', '821 822 805 806 815'] },
  { name: 'AVALC  (32A)', info: 'BLH:23:00, ABH:19:40, LEGS:10', right: 'ARN', places: [[180, 'CPH'], [777, 'LHR']],
    legs: ['501/33 502/50 505/33 506/33 1501/33', '1530 531 532 533 534', ''] },
  { name: '9HAEI  (320)', info: 'BLH:00:00, ABH:00:00, LEGS:0', left: 'CPH', right: 'CPH', legs: [] },
  { name: '9HAEK  (320)', info: '', left: 'MLA', right: 'MLA', legs: [] }
];

const D0 = 153, D1 = 738, D2 = 1326, END = 1902, REST = 293;
const off = (a, b) => ['OFF', a, b], al = (a, b) => ['AL', a, b];
const CREW = [
  { info: 'B: 09:10 D: 23:25', base: 'LHR AGP - CP/320', bars: [al(D0, D1), al(D1, D2), al(D2, END)] },
  { info: 'D: 72:00', base: 'LHR AGP - SCC/320', flag: true, bars: [off(D0, D1), al(D1, D2), al(D2, END)] },
  { info: 'B: 40:40 D: 63:47', base: 'LHR AGP - CP/320', rule: [153, 738, 'low'], grips: [276, 388], link: [281, 294],
    bars: [['FLT', 294, 388, 'AVX6205'], off(D1, D2), off(D2, END)], wedges: [393], places: [[158, 'CPH', 'black'], [549, 'AGP', 'black']] },
  { info: 'B: 45:05 D: 77:40', base: 'LHR - SCC/320', left: 'LHR', grips: [370, 562], wedges: [567],
    bars: [['GRD', 370, 567, 'GRD', true], off(D1, D2), off(D2, END)], places: [[641, 'LHR']] },
  { info: 'B: 11:45 D: 43:00', base: 'LHR AGP - FO/320', mark: 'cross', tint: 'purple', rule: [738, 1902, 'alarm'],
    bars: [off(D0, D1)], right: 'AGP / LGW', rightKind: 'black alarm' },
  { info: 'B: 34:45 D: 86:35', base: 'LHR - SCC/320 GI/320', left: 'LHR', right: 'LHR' },
  { info: 'B: 26:30 D: 42:10', base: 'LHR - SCC/320', left: 'LHR', bars: [off(D2, END)] },
  { info: 'B: [not defined] D: 72:00', base: 'LHR - SCC/320', wedges: [567, 1155, 1830], grips: [370, 562, 959, 1150, 1634, 1825],
    bars: [['OFC', 370, 567, 'OFC', true], ['OFC', 959, 1155], ['OFC', 1634, 1830]], places: [[247, 'LHR'], [750, 'LHR'], [1382, 'LHR']], right: 'LHR' },
  { info: '', base: 'LHR AGP - SCC/320', mark: 'stop', tint: 'red' },
  { info: 'B: 27:15 D: 103:45', base: 'LHR AGP - SCC/320', rule: [1302, 1902, 'low'], wedges: [1719], grips: [1522, 1714],
    bars: [off(153, 714), off(714, 1302), ['OFC', 1522, 1719]], places: [[1400, 'AGP', 'black']], right: 'AGP', rightKind: 'black' },
  { info: 'B: 20:50 D: 35:40', base: 'LHR - SCC/320', left: 'LHR', bars: [off(D2, END)] }
];

const MARKS = {
  ask: '<svg class="mark" viewBox="0 0 16 16"><circle cx="8" cy="8" r="7" fill="#d8cc00" stroke="#eee9b0" stroke-width="1.5"/><path d="M5.500 6.500c0-4 5-4 5-1 0 2-2.500 2-2.500 4" fill="none" stroke="#fff" stroke-width="1.700"/><circle cx="8" cy="12" r="1.100" fill="#fff"/></svg>',
  cross: '<svg class="mark" viewBox="0 0 16 16"><circle cx="8" cy="8" r="7" fill="#f0f" stroke="#ddd" stroke-width="1.500"/><path d="M4 4l8 8M12 4l-8 8" stroke="#fff" stroke-width="1.500" stroke-dasharray="3 1"/></svg>',
  stop: '<svg class="mark" viewBox="0 0 16 16"><circle cx="8" cy="8" r="7" fill="#e11" stroke="#ddd" stroke-width="1.500"/><circle cx="8" cy="8" r="3" fill="none" stroke="#fff" stroke-width="1.500"/><path d="M5 4l6 8" stroke="#fff" stroke-width="1.500"/></svg>'
};
const WARN = '<svg width="20" height="20" viewBox="0 0 20 20"><path d="M0 0h20L10 20z" fill="#d8c800"/><path d="M7.500 5c0-4 6-4 6 0 0 2-3 2-3 5" fill="none" stroke="#fff" stroke-width="2"/><circle cx="10.500" cy="13" r="1.300" fill="#fff"/></svg>';

const box = (cls, a, b, body = '', extra = '') =>
  `<div class="${cls}" style="left:${pos(a)};width:${len(b - a)};${extra}">${body}</div>`;
const place = (x, text, kind = '') => `<span class="place ${kind}" style="left:${pos(x)}">${text}</span>`;

function backdrop(row) {
  let html = row.tint ? `<i class="tint ${row.tint}"></i>` : '';
  for (let h = 4; h < 72; h += 4)
    html += `<i class="line ${h % 24 ? '' : 'midnight'}" style="left:${pos(MIDNIGHT + h * HOUR)}"></i>`;
  html += `<i class="now" style="left:${pos(NOW)}"></i>`;
  if (row.wedges) html += row.wedges.map(x => box('wedge', x, x + REST)).join('');
  if (row.rule) html += box('rule ' + row.rule[2], row.rule[0], row.rule[1]);
  return html;
}

function legs(row) {
  let html = '';
  row.legs.forEach((list, day) => {
    let last = null;
    list.split(' ').filter(Boolean).forEach(item => {
      const [no, open = 0] = item.split('/');
      const [dep, arr, to, timed] = FLIGHTS[no];
      const a = time(day, dep), b = time(day, arr);
      if (last) {
        const mid = (last.end + a) / 2;
        html += a - last.end > 1.6 * HOUR
          ? place(mid, last.to, 'centred')
          : `<span class="via" style="left:${pos(mid)}">${last.to}</span>`;
      }
      const hhmm = t => String(t).padStart(4, '0');
      html += box('leg' + (row.alarm ? ' alarm' : ''), a, b,
        timed ? `<b>AVX${no}</b><span>${hhmm(dep)}  ${hhmm(arr)}</span>` : `<b>${no}</b>`, `--open:${open}%`);
      last = { end: b, to };
    });
  });
  return html;
}

function labels(row) {
  let html = (row.places || []).map(p => place(...p)).join('');
  if (row.left) html += `<span class="place left">${row.left}</span>`;
  if (row.right) html += `<span class="place right ${row.rightKind || ''}">${row.right}</span>`;
  if (row.warn) html += `<span class="warn" style="left:${pos(row.warn)}">${WARN}</span>`;
  return html;
}

const bars = row => (row.bars || []).map(([kind, a, b, text, corner]) =>
  box('bar ' + kind, a, b, `<i class="chip"></i>${text || kind}${corner ? '<i class="corner"></i>' : ''}`)).join('')
  + (row.grips || []).map(x => `<i class="grip" style="left:${pos(x)}"></i>`).join('')
  + (row.link ? box('rule', ...row.link) : '');

document.getElementById('aircraft').innerHTML = AIRCRAFT.map(row =>
  `<div class="row aircraft ${row.high ? 'high' : ''}"><div class="who">${row.mark ? MARKS[row.mark] : ''}<strong>${row.name}</strong><em>${row.info}</em></div>` +
  `<div class="track">${backdrop(row)}${legs(row)}${labels(row)}</div></div>`).join('');

document.getElementById('crew').innerHTML = CREW.map(row =>
  `<div class="row crew"><div class="who">${row.mark ? MARKS[row.mark] : ''}<span>${row.info || ' '}</span><em>${row.base}</em>${row.flag ? '<i class="flag"></i>' : ''}</div>` +
  `<div class="track">${backdrop(row)}${bars(row)}${labels(row)}</div></div>`).join('');

// Day strip, 11 March to 8 April
let days = '';
for (let i = 0; i < 29; i++) {
  const date = i < 21 ? 11 + i : i - 20;
  const kind = i % 7 === 3 ? 'sat' : i % 7 === 4 ? 'sun' : i % 2 ? 'even' : '';
  days += `<div class="day ${kind}">${date}</div>`;
}
days += `<div class="range" style="left:${13 / 29 * 100}%;width:${3 / 29 * 100}%"><i></i><i></i><i></i></div>`;
document.getElementById('days').innerHTML = days;

let hours = `<i class="mid-day" style="left:${pos(738.4)};width:${len(588)}"></i>`;
for (let h = 4; h < 72; h += 4) hours += `<span style="left:${pos(MIDNIGHT + h * HOUR)}">${h % 24}</span>`;
['TUE 24', 'WED 25', 'THU 26'].forEach((d, i) => { hours += `<b style="left:${pos(MIDNIGHT + (12 + 24 * i) * HOUR)}">${d} Mar 2020</b>`; });
document.getElementById('hours').innerHTML = hours + `<i class="now" style="left:${pos(NOW)}"></i>`;
```
